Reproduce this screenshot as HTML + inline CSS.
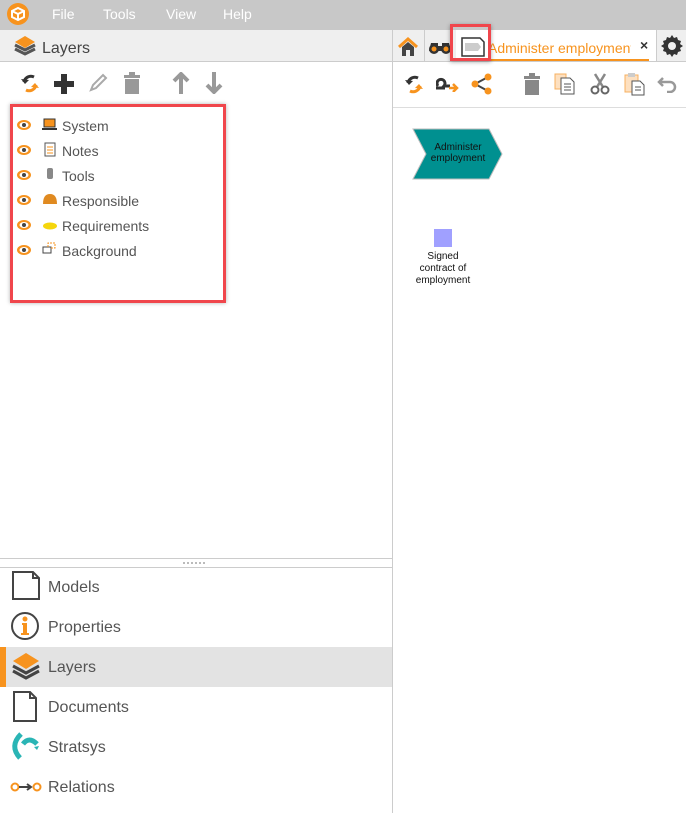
<!DOCTYPE html>
<html><head><style>
*{margin:0;padding:0;box-sizing:border-box}
body{width:686px;height:813px;overflow:hidden;background:#fff;font-family:"Liberation Sans",sans-serif;position:relative;color:#444}
.a{position:absolute}
.top{left:0;top:0;width:686px;height:30px;background:#c8c8c8}
.menu{color:#fff;font-size:14px;top:6px}
.nav{left:0;width:392px;height:40px;font-size:16px;color:#555}
.nav span{position:absolute;left:48px;top:12px}
.lay{font-size:14px;color:#555;left:62px}
</style></head><body>
<div class="a top"></div>
<svg class="a" style="left:6px;top:2px" width="24" height="24"><circle cx="12" cy="12" r="11" fill="#f7931e"/><path d="M6 9 L12 6 L18 9 L18 15 L12 18 L6 15Z M6 9 L12 12 L18 9 M12 12 L12 18" stroke="#fff" stroke-width="2" fill="none"/></svg>
<div class="a menu" style="left:52px">File</div>
<div class="a menu" style="left:103px">Tools</div>
<div class="a menu" style="left:166px">View</div>
<div class="a menu" style="left:223px">Help</div>

<div class="a" style="left:0;top:30px;width:392px;height:32px;background:#efefef;border-bottom:1px solid #ccc"></div>
<svg class="a" style="left:13px;top:35px" width="24" height="22"><path d="M2 14l10 5 10-5" stroke="#555" stroke-width="3" fill="none"/><path d="M2 10l10 5 10-5" stroke="#555" stroke-width="3" fill="none"/><path d="M12 1l10 6-10 6-10-6z" fill="#f7931e"/></svg>
<div class="a" style="left:42px;top:40px;font-size:16px;color:#444">Layers</div>
<div class="a" style="left:392px;top:30px;width:1px;height:783px;background:#ccc"></div>

<svg class="a" style="left:20px;top:73px" width="20" height="22"><path d="M14 4 A7 7 0 0 0 4 9" stroke="#333" stroke-width="3" fill="none"/><path d="M6 17 A7 7 0 0 0 16 12" stroke="#f7931e" stroke-width="3" fill="none"/><path d="M1 6l4 5 4-4z" fill="#333"/><path d="M19 15l-4-5-4 4z" fill="#f7931e"/></svg>
<svg class="a" style="left:53px;top:73px" width="22" height="22"><path d="M11 1v20M1 11h20" stroke="#333" stroke-width="6"/></svg>
<svg class="a" style="left:88px;top:73px" width="20" height="20"><path d="M3 17l2-5L15 2l3 3L8 15z" fill="none" stroke="#aaa" stroke-width="2"/></svg>
<svg class="a" style="left:123px;top:72px" width="18" height="22"><rect x="1" y="3" width="16" height="3" fill="#999"/><rect x="6" y="0" width="6" height="3" fill="#999"/><rect x="2" y="7" width="14" height="15" fill="#999"/></svg>
<svg class="a" style="left:172px;top:72px" width="18" height="22"><path d="M9 2v20M2 9l7-7 7 7" stroke="#999" stroke-width="4" fill="none"/></svg>
<svg class="a" style="left:205px;top:72px" width="18" height="22"><path d="M9 0v20M2 13l7 7 7-7" stroke="#999" stroke-width="4" fill="none"/></svg>

<div class="a" style="left:10px;top:104px;width:216px;height:199px;border:3px solid #f0464c;box-shadow:0 0 4px rgba(0,0,0,.3)"></div>
<div class="a" style="left:16px;top:117px">
<svg width="16" height="140">
<g id="e"><ellipse cx="8" cy="8" rx="7" ry="5" fill="#f7931e"/><ellipse cx="8" cy="8" rx="4.5" ry="3" fill="#fff"/><circle cx="8" cy="8" r="2" fill="#444"/></g>
<use href="#e" y="25"/><use href="#e" y="50"/><use href="#e" y="75"/><use href="#e" y="100"/><use href="#e" y="125"/>
</svg></div>
<svg class="a" style="left:42px;top:118px" width="16" height="140">
<rect x="2" y="1" width="11" height="8" fill="#f7931e" stroke="#333"/><rect x="0" y="10" width="15" height="2" fill="#333"/>
<rect x="3" y="25" width="10" height="13" fill="#fff" stroke="#555"/><path d="M5 29h6M5 32h6M5 35h6" stroke="#f7931e"/>
<rect x="5" y="50" width="6" height="11" rx="2" fill="#888"/>
<path d="M1 86 Q1 76 8 76 Q15 76 15 86z" fill="#e08a20"/>
<ellipse cx="8" cy="108" rx="7" ry="3.5" fill="#f5d60c"/>
<rect x="1" y="129" width="8" height="6" fill="none" stroke="#444"/><path d="M6 129v-4h7v5h-4" fill="none" stroke="#f7931e" stroke-dasharray="2 1"/>
</svg>
<div class="a lay" style="top:118px">System</div>
<div class="a lay" style="top:143px">Notes</div>
<div class="a lay" style="top:168px">Tools</div>
<div class="a lay" style="top:193px">Responsible</div>
<div class="a lay" style="top:218px">Requirements</div>
<div class="a lay" style="top:243px">Background</div>

<div class="a" style="left:0;top:558px;width:392px;height:1px;background:#ccc"></div>
<div class="a" style="left:0;top:567px;width:392px;height:1px;background:#ccc"></div>
<div class="a" style="left:183px;top:562px;width:22px;height:2px;border-top:2px dotted #bbb"></div>

<div class="a nav" style="top:567px"><svg class="a" style="left:12px;top:4px" width="30" height="30"><path d="M1 1h20l6 6v21H1z" fill="none" stroke="#444" stroke-width="2"/><path d="M21 1v6h6" fill="none" stroke="#444" stroke-width="2"/></svg><span>Models</span></div>
<div class="a nav" style="top:607px"><svg class="a" style="left:11px;top:5px" width="30" height="30"><circle cx="14" cy="14" r="13" fill="none" stroke="#444" stroke-width="2"/><circle cx="14" cy="7" r="2.5" fill="#f7931e"/><path d="M11 11h5v10h2v2h-8v-2h2v-8h-1z" fill="#f7931e"/></svg><span>Properties</span></div>
<div class="a nav" style="top:647px;background:#e3e3e3"><div class="a" style="left:0;top:0;width:6px;height:40px;background:#f7931e"></div><svg class="a" style="left:11px;top:5px" width="30" height="30"><path d="M2 19l13 7 13-7" stroke="#444" stroke-width="3" fill="none"/><path d="M2 14l13 7 13-7" stroke="#444" stroke-width="3" fill="none"/><path d="M15 1l13 8-13 8-13-8z" fill="#f7931e"/></svg><span>Layers</span></div>
<div class="a nav" style="top:687px"><svg class="a" style="left:13px;top:4px" width="30" height="32"><path d="M1 1h16l6 6v23H1z" fill="none" stroke="#444" stroke-width="2"/><path d="M17 1v6h6" fill="none" stroke="#444" stroke-width="2"/></svg><span>Documents</span></div>
<div class="a nav" style="top:727px"><svg class="a" style="left:11px;top:3px" width="30" height="32"><path d="M10 4 Q-2 16 9 28" stroke="#2ab5b5" stroke-width="5" fill="none"/><path d="M12 14 Q18 6 26 14" stroke="#2ab5b5" stroke-width="5" fill="none"/><path d="M23 17l5-1-2 4z" fill="#2ab5b5"/></svg><span>Stratsys</span></div>
<div class="a nav" style="top:767px"><svg class="a" style="left:10px;top:13px" width="32" height="14"><circle cx="5" cy="7" r="3.5" fill="none" stroke="#f7931e" stroke-width="2"/><circle cx="27" cy="7" r="3.5" fill="none" stroke="#f7931e" stroke-width="2"/><path d="M9 7h11M17 4l4 3-4 3" stroke="#444" stroke-width="2" fill="none"/></svg><span>Relations</span></div>

<div class="a" style="left:393px;top:30px;width:293px;height:32px;background:#efefef;border-bottom:1px solid #ccc"></div>
<div class="a" style="left:424px;top:30px;width:1px;height:31px;background:#ccc"></div>
<div class="a" style="left:456px;top:30px;width:200px;height:31px;background:#fff"></div>
<div class="a" style="left:456px;top:59px;width:193px;height:2px;background:#f7931e"></div>
<div class="a" style="left:656px;top:30px;width:1px;height:31px;background:#ccc"></div>
<svg class="a" style="left:397px;top:36px" width="22" height="22"><path d="M2 11L11 3l9 8" stroke="#f7931e" stroke-width="3" fill="none"/><path d="M5 11v9h12v-9L11 6z" fill="#444"/><rect x="9" y="14" width="4" height="6" fill="#efefef"/></svg>
<svg class="a" style="left:428px;top:37px" width="24" height="18"><path d="M3 6h7v3h4V6h7l2 8H1z" fill="#333"/><circle cx="6" cy="12" r="5" fill="#333"/><circle cx="18" cy="12" r="5" fill="#333"/><circle cx="6" cy="12" r="2.5" fill="#f7931e"/><circle cx="18" cy="12" r="2.5" fill="#f7931e"/></svg>
<svg class="a" style="left:461px;top:37px" width="24" height="20"><path d="M1 1h18l4 4v14H1z" fill="#fff" stroke="#333" stroke-width="1.5"/><path d="M4 6h13l3 4-3 4H4z" fill="#ccc"/></svg>
<div class="a" style="left:488px;top:40px;font-size:14px;color:#f7931e;width:143px;overflow:hidden;white-space:nowrap">Administer employment</div>
<div class="a" style="left:640px;top:37px;font-size:14px;color:#333;font-weight:bold">×</div>
<svg class="a" style="left:660px;top:34px" width="24" height="24" viewBox="0 0 24 24"><path d="M12 1l2 3 3-1 1 3 3 1-1 3 3 2-3 2 1 3-3 1-1 3-3-1-2 3-2-3-3 1-1-3-3-1 1-3-3-2 3-2-1-3 3-1 1-3 3 1z" fill="#333"/><circle cx="12" cy="12" r="4" fill="#efefef"/></svg>
<div class="a" style="left:450px;top:24px;width:41px;height:37px;border:3px solid #f0464c;box-shadow:0 1px 4px rgba(0,0,0,.35)"></div>

<svg class="a" style="left:404px;top:74px" width="20" height="22"><path d="M14 4 A7 7 0 0 0 4 9" stroke="#333" stroke-width="3" fill="none"/><path d="M6 17 A7 7 0 0 0 16 12" stroke="#f7931e" stroke-width="3" fill="none"/><path d="M1 6l4 5 4-4z" fill="#333"/><path d="M19 15l-4-5-4 4z" fill="#f7931e"/></svg>
<svg class="a" style="left:436px;top:76px" width="24" height="16"><path d="M2 10 A4 4 0 1 1 8 10 h6" stroke="#333" stroke-width="3" fill="none"/><path d="M0 12h9" stroke="#333" stroke-width="3"/><path d="M13 12h7M17 8l4 4-4 4" stroke="#f7931e" stroke-width="2.5" fill="none"/></svg>
<svg class="a" style="left:471px;top:73px" width="22" height="22"><path d="M4 11L17 4M4 11l13 7" stroke="#444" stroke-width="2"/><circle cx="4" cy="11" r="3.5" fill="#f7931e"/><circle cx="17" cy="4" r="3.5" fill="#f7931e"/><circle cx="17" cy="18" r="3.5" fill="#f7931e"/></svg>
<svg class="a" style="left:523px;top:73px" width="18" height="22"><rect x="1" y="3" width="16" height="3" fill="#888"/><rect x="6" y="0" width="6" height="3" fill="#888"/><rect x="2" y="7" width="14" height="15" fill="#888"/></svg>
<svg class="a" style="left:554px;top:73px" width="22" height="22"><rect x="1" y="1" width="11" height="15" fill="#fde0c0" stroke="#f7b060"/><path d="M7 5h9l4 4v12H7z" fill="#fff" stroke="#555"/><path d="M10 11h7M10 14h7M10 17h7" stroke="#555"/></svg>
<svg class="a" style="left:589px;top:73px" width="22" height="22"><path d="M6 1l8 13M16 1L8 14" stroke="#888" stroke-width="2.5"/><circle cx="6" cy="17" r="3.5" fill="none" stroke="#666" stroke-width="2"/><circle cx="16" cy="17" r="3.5" fill="none" stroke="#666" stroke-width="2"/></svg>
<svg class="a" style="left:624px;top:72px" width="22" height="24"><rect x="1" y="3" width="13" height="17" fill="#fde0c0" stroke="#f7b060"/><rect x="4" y="1" width="7" height="4" fill="#ccc"/><path d="M8 9h8l4 4v10H8z" fill="#fff" stroke="#555"/><path d="M11 15h6M11 18h6" stroke="#555"/></svg>
<svg class="a" style="left:657px;top:75px" width="22" height="18"><path d="M6 3L2 7l4 4" stroke="#999" stroke-width="2.5" fill="none"/><path d="M2 7h11a5 5 0 0 1 0 10h-3" stroke="#999" stroke-width="2.5" fill="none"/></svg>
<div class="a" style="left:393px;top:107px;width:293px;height:1px;background:#ddd"></div>

<svg class="a" style="left:412px;top:128px" width="92" height="52"><path d="M1 1h76l13 25-13 25H1l13-25z" fill="#009090" stroke="#bbb"/></svg>
<div class="a" style="left:414px;top:142px;width:88px;text-align:center;font-size:10px;color:#111;line-height:11px">Administer<br>employment</div>
<div class="a" style="left:434px;top:229px;width:18px;height:18px;background:#a0a0ff"></div>
<div class="a" style="left:408px;top:251px;width:70px;text-align:center;font-size:10px;color:#111;line-height:12px">Signed<br>contract of<br>employment</div>
</body></html>
